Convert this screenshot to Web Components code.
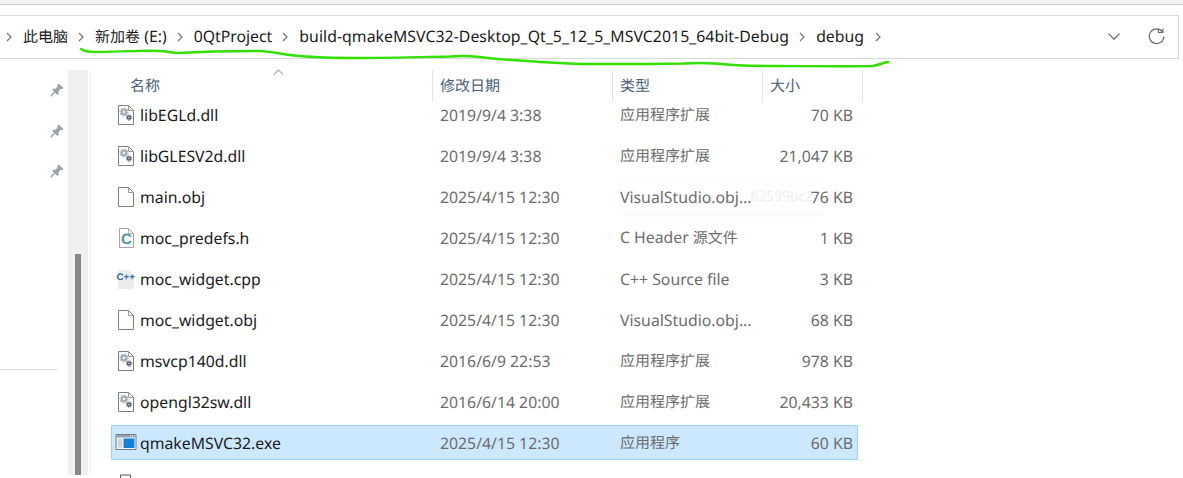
<!DOCTYPE html>
<html lang="zh"><head><meta charset="utf-8"><title>debug</title>
<style>
html,body{margin:0;padding:0;background:#fff;height:478px;overflow:hidden}
body{font:15.8px/20px "Noto Sans","Noto Sans CJK SC",sans-serif;color:#1b1b1b;text-rendering:geometricPrecision}
.z{font-size:15px}
.w{letter-spacing:.05px}
</style></head><body>
<fx-window>
  <fx-address slot="top">
    <fx-crumb><span class="z">此电脑</span></fx-crumb><fx-crumb><span class="z">新加卷</span> (E:)</fx-crumb><fx-crumb>0QtProject</fx-crumb><fx-crumb><span class="w">build-qmakeMSVC32-Desktop_Qt_5_12_5_MSVC2015_64bit-Debug</span></fx-crumb><fx-crumb>debug</fx-crumb>
  </fx-address>
  <fx-nav slot="nav"></fx-nav>
  <fx-files slot="files">
    <fx-row icon="dll" name="libEGLd.dll" date="2019/9/4 3:38" type="应用程序扩展" size="70 KB"></fx-row>
    <fx-row icon="dll" name="libGLESV2d.dll" date="2019/9/4 3:38" type="应用程序扩展" size="21,047 KB"></fx-row>
    <fx-row icon="file" name="main.obj" date="2025/4/15 12:30" type="VisualStudio.obj..." size="76 KB" ghost="62599bc2"></fx-row>
    <fx-row icon="c" name="moc_predefs.h" date="2025/4/15 12:30" type="C Header 源文件" size="1 KB"></fx-row>
    <fx-row icon="cpp" name="moc_widget.cpp" date="2025/4/15 12:30" type="C++ Source file" size="3 KB"></fx-row>
    <fx-row icon="file" name="moc_widget.obj" date="2025/4/15 12:30" type="VisualStudio.obj..." size="68 KB"></fx-row>
    <fx-row icon="dll" name="msvcp140d.dll" date="2016/6/9 22:53" type="应用程序扩展" size="978 KB"></fx-row>
    <fx-row icon="dll" name="opengl32sw.dll" date="2016/6/14 20:00" type="应用程序扩展" size="20,433 KB"></fx-row>
    <fx-row icon="exe" name="qmakeMSVC32.exe" date="2025/4/15 12:30" type="应用程序" size="60 KB" selected></fx-row>
    <fx-row icon="partial"></fx-row>
  </fx-files>
</fx-window>
<script>
const chevron='<svg width="6" height="10" viewBox="0 0 6 10" fill="none" stroke="#7a7a7a" stroke-width="1.3"><path d="M1 1l4 4-4 4"/></svg>';
const cjk=s=>s.replace(/[\u4e00-\u9fff]+/g,m=>`<span style="font-size:15px">${m}</span>`);
function sheet(css,html){return `<style>${css}</style>${html}`}
class Base extends HTMLElement{
  render(h){(this.shadowRoot||this.attachShadow({mode:'open'})).innerHTML=h}
}
customElements.define('fx-window',class extends Base{connectedCallback(){this.render(sheet(`
:host{display:block;width:1183px;height:478px;position:relative;overflow:hidden;background:#fff}
.band{height:4px;background:#f1f1f1;border-bottom:1px solid #cfcfcf}
.gap{height:10px}
.body{display:flex;height:405px;margin-top:11px}
.ink{position:absolute;left:0;top:0;pointer-events:none}
`,`<div class="band"></div><div class="gap"></div><slot name="top"></slot>
<div class="body"><slot name="nav"></slot><slot name="files"></slot></div>
<svg class="ink" width="1183" height="80" fill="none" stroke="#33e000" stroke-width="2.400" stroke-linecap="round" stroke-linejoin="round"><path d="M81 49C84 51 88 52 95 52C115 52 145 50 160 51C168 51 170 53 178 53C195 52 225 51 260 51C275 52 285 55 300 56C320 58 340 58 360 58C390 58 425 57 450 56.500C462 55.500 470 56 480 57C500 60 520 60 540 62C560 63 570 64 590 64C620 64 660 64 683 63.500C700 62.500 715 63 727 64.500C740 66 750 66 770 66C800 66 840 66.500 873 66C878 65 882 63 888 62"/></svg>`))}});
customElements.define('fx-address',class extends Base{connectedCallback(){this.render(sheet(`
:host{display:flex;align-items:center;box-sizing:border-box;height:44px;width:1179px;border:1px solid #d9d9d9;border-left:0;padding-left:6px}
.crumbs{display:flex;align-items:center;flex:1;height:100%;padding-bottom:2px;box-sizing:border-box}
.right{display:flex;align-items:center;gap:28px;padding:0 13px 1px 0}
`,`<div class="crumbs"><slot></slot></div>
<div class="right">
<svg width="12" height="7" viewBox="0 0 12 7" fill="none" stroke="#5f5f5f" stroke-width="1.2"><path d="M.5.7l5.500 5.500L11.500.7"/></svg>
<svg width="17" height="17" viewBox="0 0 17 17" fill="none" stroke="#6b6b6b" stroke-width="1.2"><path d="M14.400 3.800A7.300 7.300 0 1 0 15.900 8.500"/><path d="M10.400 1.200v3.300h4.500V.4"/></svg>
</div>`))}});
customElements.define('fx-crumb',class extends Base{connectedCallback(){this.render(sheet(`
:host{display:flex;align-items:center;gap:11px;margin-right:10px;white-space:nowrap;color:#1b1b1b}
`,`<span>${chevron}</span><span><slot></slot></span>`+(this.nextElementSibling?'':`<span>${chevron}</span>`)))}});
customElements.define('fx-nav',class extends Base{connectedCallback(){
const pin='<svg width="14" height="14" viewBox="0 0 14 14"><path d="M8.500.4l5 4.600-1.800 1.300-1.200-.5-2 2.700.2 2.200-1.300 1.200L2.300 6.800l1.200-1.200 2.300.1 2-2.600-.5-1.300z" fill="#98a3ab"/><path d="M4.700 9L.8 13.200" stroke="#98a3ab" stroke-width="1.400" fill="none"/></svg>';
this.render(sheet(`
:host{display:flex;flex:none;width:91px;height:100%}
.pane{width:68px;position:relative;display:flex;flex-direction:column}
.pins{display:flex;flex-direction:column;gap:26.500px;align-items:flex-end;padding:13px 4px 0 0}
.pins svg{display:block}
.rule{height:1px;background:#d9d9d9;width:57px;margin-top:191px}
.track{width:20px;background:#f0f0f0;display:flex;justify-content:center;padding-top:184px;box-sizing:border-box}
.thumb{width:6px;background:#888;flex:none;height:100%}
.edge{width:1px;margin-left:2px;background:#f3f3f3}
`,`<div class="pane"><div class="pins">${pin}${pin}${pin}</div><div class="rule"></div></div><div class="track"><div class="thumb"></div></div><div class="edge"></div>`))}});
customElements.define('fx-files',class extends Base{connectedCallback(){this.render(sheet(`
:host{display:block;flex:none;width:772px;margin-left:20px;position:relative}
.head{display:grid;grid-template-columns:322px 180px 150px 100px;height:32px;margin-bottom:-5px;color:#4c607a;position:relative;font-size:15px}
.head div{border-right:1px solid #e5e5e5;padding:6px 0 0 7px;box-sizing:border-box}
.head div:first-child{padding-left:19px;position:relative}
.caret{position:absolute;left:162px;top:-1px}
.rows{display:flex;flex-direction:column;gap:6px}
`,`<div class="head"><div>名称<svg class="caret" width="11" height="6" viewBox="0 0 11 6" fill="none" stroke="#7d7d7d" stroke-width="1"><path d="M.8 5.500L5.500 1l4.700 4.500"/></svg></div><div>修改日期</div><div>类型</div><div>大小</div></div><div class="rows"><slot></slot></div>`))}});
const gear=`<g fill="none"><circle cx="7" cy="7" r="2.300" stroke="#a3adb6" stroke-width="2.300"/><circle cx="7" cy="7" r="4" stroke="#a3adb6" stroke-width="1.200" stroke-dasharray="1.500 1.600"/><circle cx="12" cy="12.500" r="1.500" stroke="#566069" stroke-width="1.600"/><circle cx="12" cy="12.500" r="2.800" stroke="#566069" stroke-width=".9" stroke-dasharray="1.100 1.100"/></g>`;
const page=(fill,extra='')=>`<path d="M1.500.5h10l5 5v14h-15z" fill="${fill}" stroke="#7f7f7f"/><path d="M11.500.5v5h5" fill="none" stroke="#9a9a9a"/>${extra}`;
const icons={
 file:page('#fdfdfd'),
 dll:page('#fdfdfd',gear),
 c:`<path d="M2.500.5h9l5 5v14h-14z" fill="#fff" stroke="#a5a5a5"/><path d="M11.500.5v5h5" fill="none" stroke="#b0b0b0"/><text x="4" y="15.500" font-family="Liberation Sans" font-weight="700" font-size="15" fill="#4d93a8">C</text>`,
 cpp:`<path d="M1 1h11l5 5v14H1z" fill="#ececec"/><text x="-.5" y="11" font-family="Liberation Sans" font-weight="700" font-size="9.500" textLength="18.500" lengthAdjust="spacingAndGlyphs" fill="#2c6ca8">C++</text>`,
 exe:`<path d="M-1 1.500h20v15H-1z" fill="#f4f7fa" stroke="#6f7d8b"/><path d="M-.5 2h19v2.500h-19z" fill="#8fa3b8"/><path d="M.5 5.500h5v9.500h-5z" fill="#dfe8f1"/><path d="M1 7h4M1 9h4M1 11h4M1 13h4" stroke="#a9bccf" stroke-width=".8"/><path d="M6.500 5.500h11v9.500h-11z" fill="#1680d8"/><path d="M13 2.800h4.500" stroke="#eef3f8" stroke-width="1" stroke-dasharray="1 1"/>`,
 partial:`<path d="M3.500 1h10v19h-10z" fill="#fff" stroke="#555"/>`
};
customElements.define('fx-row',class extends Base{connectedCallback(){
const a=n=>this.getAttribute(n)||'';
const ghost=a('ghost');
this.render(sheet(`
:host{display:block;box-sizing:border-box;height:35px;width:747px;flex:none}
:host([selected]){background:#cce8ff;outline:1px solid #99d1ff;outline-offset:-1px;border-radius:1px}
.r{display:grid;grid-template-columns:29px 291px 180px 1fr;height:100%;align-items:center;position:relative;color:#6d6d6d}
.i{display:flex;padding-left:6px}
.i svg{overflow:visible}
.n{color:#1b1b1b;white-space:nowrap}
.d{padding-left:9px}
.t{padding-left:9px;white-space:nowrap;position:relative;z-index:1}
.s{position:absolute;right:5px;top:0;height:100%;display:flex;align-items:center;white-space:nowrap;z-index:1}
.ghost{position:absolute;left:509px;top:0;height:100%;width:202px;box-sizing:border-box;display:flex;align-items:center;justify-content:flex-end;padding-right:9px;font-size:13.800px;color:#f1edee;background:rgba(255,255,255,.55);box-shadow:0 1px 3px rgba(0,0,0,.05)}
`,`<div class="r"><span class="i"><svg width="18" height="20" viewBox="0 0 18 20">${icons[a('icon')]}</svg></span><span class="n">${a('name')}</span><span class="d">${a('date')}</span><span class="t">${cjk(a('type'))}</span><span class="s">${a('size')}</span>${ghost?`<span class="ghost">${ghost}</span>`:''}</div>`))}});
</script>
</body></html>
